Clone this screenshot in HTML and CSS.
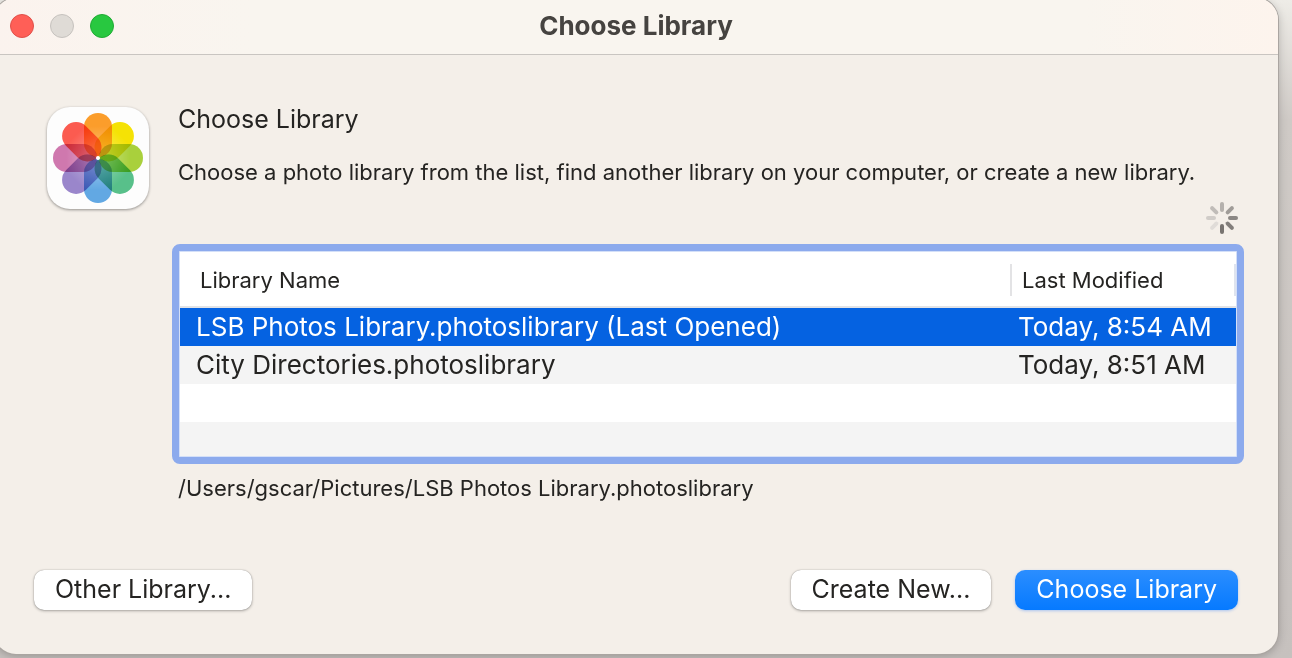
FILE: index.html
```html
<!DOCTYPE html>
<html lang="en">
<head>
    <meta charset="UTF-8">
    <meta name="viewport" content="width=device-width, initial-scale=1.0">
    <title>Choose Library</title>
    <link rel="stylesheet" href="styles.css">
</head>
<body>
    <div class="window">
        <header class="titlebar">
            <div class="lights">
                <button type="button" class="light close" aria-label="Close"></button>
                <button type="button" class="light minimize" aria-label="Minimize" disabled></button>
                <button type="button" class="light zoom" aria-label="Zoom"></button>
            </div>
            <h1>Choose Library</h1>
        </header>

        <main class="content">
            <!-- Photos icon: eight overlapping petals -->
            <div class="app-icon">
                <svg viewBox="-51 -51 102 102" width="102" height="102" aria-hidden="true">
                    <defs>
                        <linearGradient id="fade" x1="0" y1="0" x2="0" y2="1">
                            <stop offset="0.3" stop-color="#fff" stop-opacity="0"/>
                            <stop offset="0.8" stop-color="#fff" stop-opacity="0.3"/>
                        </linearGradient>
                        <g id="petal">
                            <rect x="-14" y="-45" width="28" height="44" rx="14"/>
                            <rect x="-14" y="-45" width="28" height="44" rx="14" fill="url(#fade)"/>
                        </g>
                    </defs>
                    <g class="petals">
                        <use href="#petal" fill="#fb9d2b"/>
                        <use href="#petal" fill="#f5e205" transform="rotate(45)"/>
                        <use href="#petal" fill="#a9d03c" transform="rotate(90)"/>
                        <use href="#petal" fill="#58c08a" transform="rotate(135)"/>
                        <use href="#petal" fill="#62a8e3" transform="rotate(180)"/>
                        <use href="#petal" fill="#9a86cb" transform="rotate(225)"/>
                        <use href="#petal" fill="#cf78ae" transform="rotate(270)"/>
                        <use href="#petal" fill="#fb5b50" transform="rotate(315)"/>
                    </g>
                    <circle r="2" fill="#fff"/>
                </svg>
            </div>

            <div class="chooser">
                <h2>Choose Library</h2>
                <p class="info">Choose a photo library from the list, find another library on your computer, or create a new library.</p>

                <!-- Loading spinner -->
                <svg class="spinner" viewBox="-16 -16 32 32" width="32" height="32" role="img" aria-label="Loading">
                    <path d="M0-8V-14" stroke="#b5b1ad"/>
                    <path d="M0-8V-14" stroke="#a09c98" transform="rotate(45)"/>
                    <path d="M0-8V-14" stroke="#8b8784" transform="rotate(90)"/>
                    <path d="M0-8V-14" stroke="#827e7b" transform="rotate(135)"/>
                    <path d="M0-8V-14" stroke="#777370" transform="rotate(180)"/>
                    <path d="M0-8V-14" stroke="#e0dcd8" transform="rotate(225)"/>
                    <path d="M0-8V-14" stroke="#d0ccc8" transform="rotate(270)"/>
                    <path d="M0-8V-14" stroke="#c0bcb8" transform="rotate(315)"/>
                </svg>

                <div class="list" tabindex="0">
                    <table>
                        <thead>
                            <tr>
                                <th scope="col">Library Name</th>
                                <th scope="col" class="modified">Last Modified</th>
                            </tr>
                        </thead>
                        <tbody>
                            <tr class="selected">
                                <td>LSB Photos Library.photoslibrary (Last Opened)</td>
                                <td>Today, 8:54 AM</td>
                            </tr>
                            <tr>
                                <td>City Directories.photoslibrary</td>
                                <td>Today, 8:51 AM</td>
                            </tr>
                            <tr><td></td><td></td></tr>
                            <tr><td></td><td></td></tr>
                        </tbody>
                    </table>
                </div>

                <p class="path">/Users/gscar/Pictures/LSB Photos Library.photoslibrary</p>
            </div>
        </main>

        <footer class="actions">
            <button type="button" class="btn other">Other Library...</button>
            <button type="button" class="btn">Create New...</button>
            <button type="button" class="btn primary">Choose Library</button>
        </footer>
    </div>
</body>
</html>
```

FILE: styles.css
```css
* {
    box-sizing: border-box;
}

body {
    display: flex;
    min-height: 100vh;
    margin: 0;
    overflow: hidden;
    font-family: Inter, "Liberation Sans", sans-serif;
    color: #252422;
    background: linear-gradient(#eeece7, #cfcac6 120px, #c6c1be);
}

h1, h2, p {
    margin: 0;
    font-weight: normal;
}

.window {
    flex: 1;
    display: flex;
    flex-direction: column;
    margin: -2px 14px 4px -6px;
    background-color: #f4efe9;
    border-radius: 22px;
    box-shadow: 0 0 0 1px #aaa5a1, 0 2px 10px rgba(0, 0, 0, 0.25);
    overflow: hidden;
}

/* Title bar */
.titlebar {
    display: grid;
    grid-template-columns: 1fr auto 1fr;
    align-items: center;
    height: 57px;
    padding: 0 16px;
    background: linear-gradient(90deg, #fbf3ee, #f9f5ef 20%, #f9f5ef 85%, #fdf4ed);
    border-bottom: 1px solid #c9c5c1;
}

.titlebar h1 {
    font-size: 26px;
    font-weight: 700;
    color: #464340;
    line-height: 32px;
}

.lights {
    display: flex;
    gap: 16px;
}

.light {
    width: 24px;
    height: 24px;
    padding: 0;
    border: 1px solid #dfdbd6;
    border-radius: 50%;
}

.close {
    background-color: #ff5f57;
    border-color: #e0504a;
}

.minimize {
    background-color: #dfdbd6;
    border-color: #c6c2be;
}

.zoom {
    background-color: #28c840;
    border-color: #20ab34;
}

/* Main area */
.content {
    display: flex;
    gap: 29px;
    padding: 48px 40px 0 53px;
}

.app-icon {
    flex: none;
    width: 102px;
    height: 102px;
    margin-top: 4px;
    background-color: #fdfdfd;
    border-radius: 23px;
    box-shadow: 0 1px 3px rgba(0, 0, 0, 0.4);
}

.app-icon svg {
    display: block;
}

.petals {
    isolation: isolate;
}

.petals use {
    mix-blend-mode: multiply;
}

.chooser {
    flex: 1;
    display: flex;
    flex-direction: column;
    min-width: 0;
}

.chooser h2 {
    font-size: 25px;
    line-height: 32px;
}

.info,
.path {
    font-size: 22px;
    line-height: 28px;
    white-space: nowrap;
}

.info {
    margin-top: 23px;
}

.spinner {
    align-self: flex-end;
    margin-top: 16px;
    fill: none;
    stroke-width: 4;
    stroke-linecap: round;
}

.list {
    height: 206px;
    margin: 17px 1px 0;
    background-color: #fff;
    border: 1px solid #d3dff8;
    outline: 7px solid #8caaed;
    border-radius: 1px;
    overflow: hidden;
}

table {
    width: 100%;
    border-collapse: collapse;
    table-layout: fixed;
}

th,
td {
    height: 38px;
    padding: 0 16px;
    font-size: 26px;
    font-weight: normal;
    line-height: 32px;
    text-align: left;
    white-space: nowrap;
}

th {
    height: 56px;
    padding: 0 20px;
    font-size: 22px;
    box-shadow: inset 0 -2px #e2e3e6;
}

th.modified {
    width: 226px;
    padding: 0 12px;
    background: linear-gradient(#e3e3e5, #e3e3e5) 0 12px / 2px 32px no-repeat,
                linear-gradient(#dfe4ef, #dfe4ef) 100% 12px / 2px 32px no-repeat;
}

td:last-child {
    padding: 0 8px;
}

tbody tr:nth-child(even) {
    background-color: #f4f4f4;
}

tbody .selected {
    color: #fff;
    background-color: #0562e1;
}

.path {
    margin-top: 17px;
}

/* Buttons */
.actions {
    display: flex;
    gap: 24px;
    margin-top: auto;
    padding: 0 40px 44px;
}

.btn {
    height: 40px;
    padding: 0 21px 2px;
    border: none;
    border-radius: 10px;
    font-family: inherit;
    font-size: 25px;
    line-height: 32px;
    color: #252422;
    background-color: #fff;
    box-shadow: 0 0 1px rgba(0, 0, 0, 0.4), 0 1px 3px rgba(0, 0, 0, 0.3);
}

.other {
    margin-right: auto;
}

.primary {
    color: #fff;
    background: linear-gradient(#2b8eff, #067aff);
    box-shadow: 0 1px 3px rgba(0, 100, 255, 0.3);
}
```
